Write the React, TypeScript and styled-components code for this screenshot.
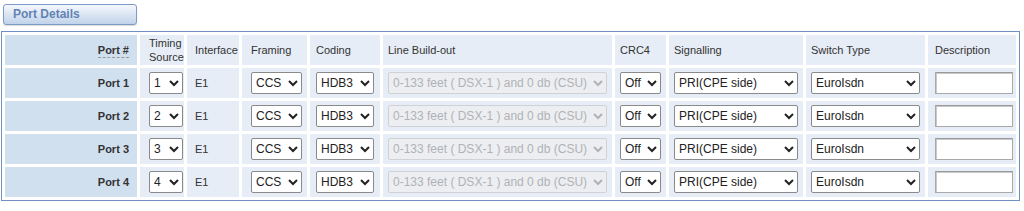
import React from "react";
import styled, { createGlobalStyle } from "styled-components";

const Global = createGlobalStyle`
  html, body { margin: 0; padding: 0; background: #fff; }
  body { font-family: "Liberation Sans", Arial, sans-serif; font-size: 11px; color: #333; }
`;

const Page = styled.div`
  padding: 4px 0 0 0;
  width: 1024px;
`;

const SectionButton = styled.div`
  margin-left: 3px;
  width: 134px;
  height: 21px;
  box-sizing: border-box;
  border: 1px solid #7d9bc6;
  border-radius: 3px;
  background: linear-gradient(to bottom, #f4f8fd 0%, #dde7f4 45%, #c1d3ea 100%);
  box-shadow: 0 1px 1px rgba(0, 0, 0, 0.15);
  color: #6383b3;
  font-weight: bold;
  font-size: 12px;
  line-height: 19px;
  padding-left: 9px;
`;

const Table = styled.table`
  margin: 6px 0 0 1px;
  width: 1018px;
  border: 1px solid #6f90c0;
  border-spacing: 3px;
  table-layout: fixed;
`;

const HeadCell = styled.th<{ $first?: boolean; $pad: number }>`
  height: 30px;
  padding: 0 ${(p) => (p.$first ? 8 : 2)}px 0 ${(p) => p.$pad}px;
  background: ${(p) => (p.$first ? "#d1e0ef" : "#e6edf6")};
  text-align: ${(p) => (p.$first ? "right" : "left")};
  font-weight: ${(p) => (p.$first ? "bold" : "normal")};
  font-size: 11px;
  line-height: 14px;
  color: #333;
  vertical-align: middle;
`;

const Cell = styled.td<{ $first?: boolean; $pad: number }>`
  height: 30px;
  padding: 0 ${(p) => (p.$first ? 8 : 0)}px 0 ${(p) => p.$pad}px;
  background: ${(p) => (p.$first ? "#d1e0ef" : "#e6edf6")};
  text-align: ${(p) => (p.$first ? "right" : "left")};
  font-weight: ${(p) => (p.$first ? "bold" : "normal")};
  font-size: 11px;
  color: #333;
  vertical-align: middle;
  white-space: nowrap;
`;

const Abbr = styled.span`
  border-bottom: 1px dashed #999;
  padding-bottom: 1px;
`;

const Select = styled.select<{ $w: number }>`
  width: ${(p) => p.$w}px;
  height: 22px;
  font-family: "Liberation Sans", Arial, sans-serif;
  font-size: 12px;
  color: #222;
  background: #fff;
  border: 1px solid #8a8a8a;
  border-radius: 2px;
  vertical-align: middle;
  &:disabled {
    background: #efefef;
    color: #9a9a9a;
    border-color: #c6c6c6;
  }
`;

const TextInput = styled.input`
  width: 78px;
  height: 22px;
  box-sizing: border-box;
  border: 1px solid #a9a9a9;
  border-top-color: #9a9a9a;
  box-shadow: inset 1px 1px 0 #c9c9c9;
  background: #fff;
  vertical-align: middle;
  font-family: "Liberation Sans", Arial, sans-serif;
  font-size: 12px;
`;

const cols = [
  { w: 132, pad: 4 },
  { w: 44, pad: 9 },
  { w: 52, pad: 8 },
  { w: 65, pad: 9 },
  { w: 70, pad: 6 },
  { w: 229, pad: 5 },
  { w: 51, pad: 5 },
  { w: 134, pad: 5 },
  { w: 119, pad: 5 },
  { w: 88, pad: 7 },
];

const headers: React.ReactNode[] = [
  <Abbr>Port #</Abbr>,
  <>Timing<br />Source</>,
  "Interface",
  "Framing",
  "Coding",
  "Line Build-out",
  "CRC4",
  "Signalling",
  "Switch Type",
  "Description",
];

const ports = [1, 2, 3, 4];

export default function App() {
  return (
    <Page>
      <Global />
      <SectionButton>Port Details</SectionButton>
      <Table>
        <colgroup>
          {cols.map((c, i) => (
            <col key={i} style={{ width: c.w }} />
          ))}
        </colgroup>
        <thead>
          <tr>
            {headers.map((h, i) => (
              <HeadCell key={i} $first={i === 0} $pad={cols[i].pad}>
                {h}
              </HeadCell>
            ))}
          </tr>
        </thead>
        <tbody>
          {ports.map((p) => (
            <tr key={p}>
              <Cell $first $pad={cols[0].pad}>Port {p}</Cell>
              <Cell $pad={cols[1].pad}>
                <Select $w={34} defaultValue={String(p)}>
                  {ports.map((n) => (
                    <option key={n} value={String(n)}>{n}</option>
                  ))}
                </Select>
              </Cell>
              <Cell $pad={cols[2].pad}>E1</Cell>
              <Cell $pad={cols[3].pad}>
                <Select $w={51} defaultValue="CCS">
                  <option>CCS</option>
                  <option>CAS</option>
                </Select>
              </Cell>
              <Cell $pad={cols[4].pad}>
                <Select $w={58} defaultValue="HDB3">
                  <option>HDB3</option>
                  <option>AMI</option>
                </Select>
              </Cell>
              <Cell $pad={cols[5].pad}>
                <Select $w={219} disabled defaultValue="a">
                  <option value="a">0-133 feet ( DSX-1 ) and 0 db (CSU)</option>
                </Select>
              </Cell>
              <Cell $pad={cols[6].pad}>
                <Select $w={41} defaultValue="Off">
                  <option>Off</option>
                  <option>On</option>
                </Select>
              </Cell>
              <Cell $pad={cols[7].pad}>
                <Select $w={124} defaultValue="PRI(CPE side)">
                  <option>PRI(CPE side)</option>
                  <option>PRI(NET side)</option>
                </Select>
              </Cell>
              <Cell $pad={cols[8].pad}>
                <Select $w={109} defaultValue="EuroIsdn">
                  <option>EuroIsdn</option>
                  <option>National ISDN 2</option>
                </Select>
              </Cell>
              <Cell $pad={cols[9].pad}>
                <TextInput type="text" />
              </Cell>
            </tr>
          ))}
        </tbody>
      </Table>
    </Page>
  );
}
